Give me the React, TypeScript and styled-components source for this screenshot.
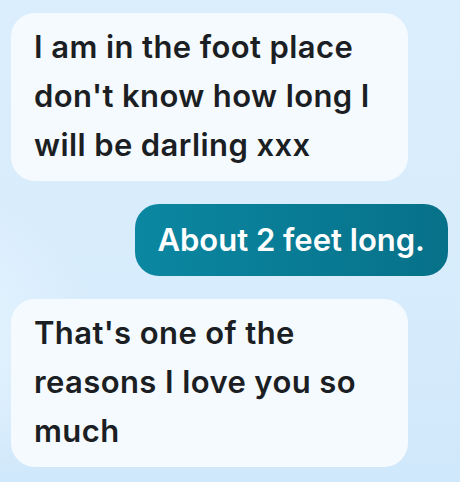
import styled, { createGlobalStyle } from 'styled-components';
import React from 'react';

const GlobalStyle = createGlobalStyle`
  html, body {
    margin: 0;
    padding: 0;
  }
  body {
    background: #d8edfc;
  }
`;

const Screen = styled.div`
  width: 460px;
  height: 482px;
  box-sizing: border-box;
  padding: 13px 12px 0 11px;
  display: flex;
  flex-direction: column;
  gap: 23px;
  overflow: hidden;
  font-family: Inter, Roboto, sans-serif;
  background:
    radial-gradient(ellipse 240px 220px at -70px 340px, rgba(234, 246, 255, 0.9), rgba(234, 246, 255, 0) 70%),
    linear-gradient(180deg, #dbeefd 0%, #d7ecfc 60%, #d0e8fb 100%);
`;

const Row = styled.div<{ $out?: boolean }>`
  display: flex;
  justify-content: ${(p) => (p.$out ? 'flex-end' : 'flex-start')};
`;

const Bubble = styled.div<{ $out?: boolean }>`
  box-sizing: border-box;
  width: ${(p) => (p.$out ? 'auto' : '397px')};
  padding: ${(p) => (p.$out ? '11px 23px 12px 22px' : '9px 20px 12px 23px')};
  border-radius: 24px;
  font-size: 31px;
  font-weight: 600;
  line-height: 49px;
  letter-spacing: ${(p) => (p.$out ? '0' : '0.4px')};
  color: ${(p) => (p.$out ? '#ffffff' : '#1b1f23')};
  background: ${(p) => (p.$out ? 'linear-gradient(90deg, #0b87a2 0%, #077189 100%)' : '#f5faff')};
`;

const App = () => {
  return (
    <>
      <GlobalStyle />
      <Screen>
        <Row>
          <Bubble>I am in the foot place don't know how long I will be darling xxx</Bubble>
        </Row>
        <Row $out>
          <Bubble $out>About 2 feet long.</Bubble>
        </Row>
        <Row>
          <Bubble>That's one of the reasons I love you so much</Bubble>
        </Row>
      </Screen>
    </>
  );
};

export default App;
